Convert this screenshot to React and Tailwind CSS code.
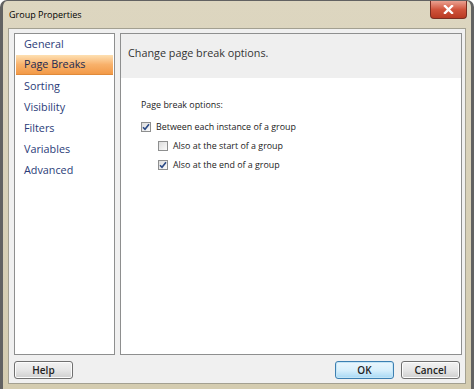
import React from 'react'

const NAV = ['General', 'Page Breaks', 'Sorting', 'Visibility', 'Filters', 'Variables', 'Advanced']

function CheckBox({ checked }) {
  return (
    <span className="w-[10px] h-[10px] shrink-0 border border-[#8e8f8f] bg-gradient-to-br from-[#dcdcdc] to-[#fbfbfb] flex items-center justify-center">
      {checked && (
        <svg width="8" height="8" viewBox="0 0 8 8">
          <path d="M1 4.2 L3 6.3 L7 1.2" fill="none" stroke="#2b4a86" strokeWidth="1.6" />
        </svg>
      )}
    </span>
  )
}

function Button({ children, focused }) {
  return (
    <button
      className={
        'h-[18px] w-[59px] rounded-[3px] border text-[10px] font-semibold text-[#222] leading-none bg-gradient-to-b ' +
        (focused
          ? 'border-[#3c7fb1] from-[#eaf6fd] via-[#d9f0fc] to-[#a7d9f5] shadow-[inset_0_0_0_1px_#c4e5f6]'
          : 'border-[#707070] from-[#f2f2f2] via-[#e6e6e6] to-[#cfcfcf] shadow-[inset_0_0_0_1px_#fcfcfc]')
      }
    >
      {children}
    </button>
  )
}

export default function App() {
  return (
    <div
      className="w-[474px] h-[389px] flex flex-col bg-gradient-to-b from-[#ddd6c0] to-[#d4ccb0] border-x-[3px] border-t border-[#626262] rounded-t-[7px] overflow-hidden"
      style={{ fontFamily: '"Open Sans", "Noto Sans", sans-serif' }}
    >
      {/* title bar */}
      <div className="h-[27px] flex items-start justify-between shrink-0">
        <span className="pl-[6px] pt-[7px] text-[9px] text-black">Group Properties</span>
        <div className="mr-[4px] w-[37px] h-[18px] rounded-b-[4px] border border-t-0 border-[#7a2e22] bg-gradient-to-b from-[#e9a090] via-[#d0543c] to-[#b93a22] flex items-center justify-center">
          <svg width="11" height="9" viewBox="0 0 11 9">
            <path d="M2 1 L9 8 M9 1 L2 8" stroke="#fff" strokeWidth="2.4" strokeLinecap="square" />
          </svg>
        </div>
      </div>

      {/* client */}
      <div className="mx-[5px] mb-[5px] flex-1 bg-[#f0f0f0] border border-[#a3a091] flex flex-col pt-[4px] pl-[5px] pr-[3px]">
        <div className="flex gap-[5px] h-[322px]">
          {/* nav */}
          <div className="w-[101px] bg-white border border-[#8e8f8f] flex flex-col">
            {NAV.map(n =>
              n === 'Page Breaks' ? (
                <div key={n} className="h-[21px] flex items-start">
                  <div className="mx-px w-full h-[20px] flex items-center pl-[8px] text-[10.8px] text-[#1c2a52] bg-gradient-to-b from-[#fde0b2] via-[#f8b16b] to-[#f29a47] border-b border-[#e08a3a]">
                    {n}
                  </div>
                </div>
              ) : (
                <div key={n} className="h-[21px] flex items-center pl-[9px] text-[10.8px] text-[#2a3b78]">
                  {n}
                </div>
              )
            )}
          </div>

          {/* content */}
          <div className="flex-1 bg-white border border-[#8e8f8f] flex flex-col">
            <div className="h-[44px] bg-[#efefef] flex items-center pl-[7px] pb-[5px] text-[10.8px] text-[#333]">
              Change page break options.
            </div>
            <div className="pl-[20px] pt-[19px] text-[8.9px] text-[#1b1b1b]">
              <div className="h-[16px] flex items-center">Page break options:</div>
              <div className="mt-[4px] h-[19px] flex items-center gap-[5px]">
                <CheckBox checked />
                <span>Between each instance of a group</span>
              </div>
              <div className="pl-[17px] h-[19px] flex items-center gap-[5px]">
                <CheckBox />
                <span>Also at the start of a group</span>
              </div>
              <div className="pl-[17px] h-[19px] flex items-center gap-[5px]">
                <CheckBox checked />
                <span>Also at the end of a group</span>
              </div>
            </div>
          </div>
        </div>

        {/* buttons */}
        <div className="flex items-center mt-[6px]">
          <Button>Help</Button>
          <div className="flex-1" />
          <Button focused>OK</Button>
          <div className="w-[7px]" />
          <Button>Cancel</Button>
          <div className="w-[2px]" />
        </div>
      </div>
    </div>
  )
}
